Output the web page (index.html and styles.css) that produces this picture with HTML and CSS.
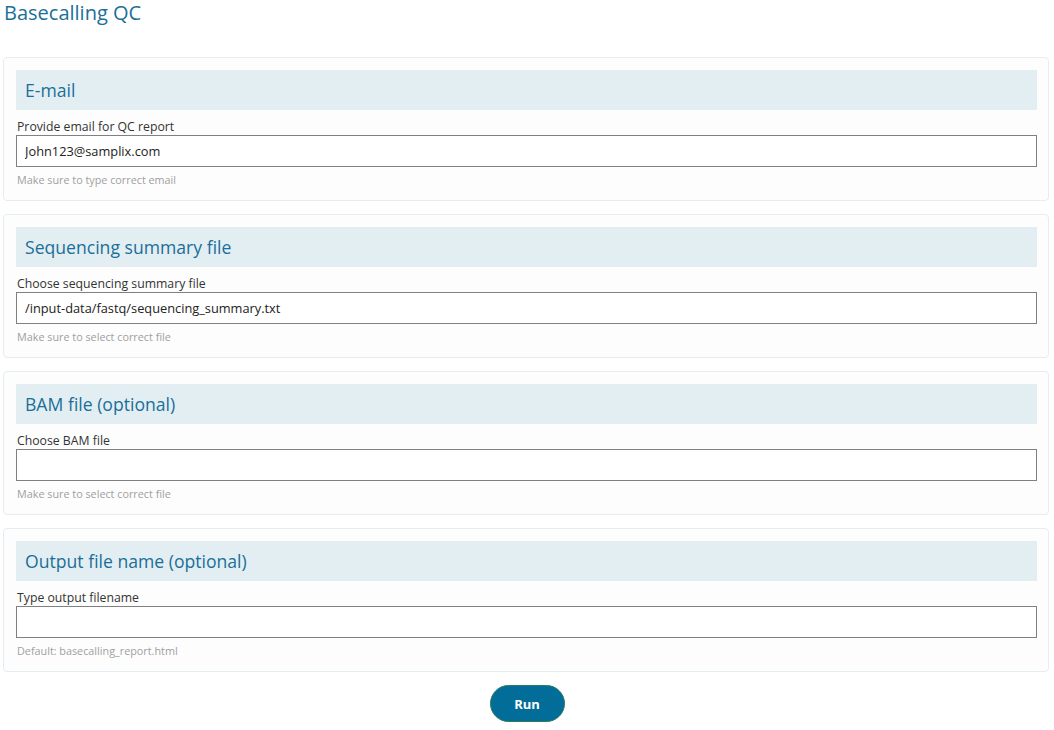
FILE: index.html
```html
<!DOCTYPE html>
<html lang="en">
<head>
<meta charset="utf-8">
<title>Basecalling QC</title>
<link rel="stylesheet" href="styles.css">
</head>
<body>
<h1 class="page-title">Basecalling QC</h1>
<form class="form">
  <section class="card">
    <div class="card-header">E-mail</div>
    <label class="field-label">Provide email for QC report</label>
    <input class="field-input" type="text" value="John123@samplix.com">
    <div class="field-help">Make sure to type correct email</div>
  </section>
  <section class="card">
    <div class="card-header">Sequencing summary file</div>
    <label class="field-label">Choose sequencing summary file</label>
    <input class="field-input" type="text" value="/input-data/fastq/sequencing_summary.txt">
    <div class="field-help">Make sure to select correct file</div>
  </section>
  <section class="card">
    <div class="card-header">BAM file (optional)</div>
    <label class="field-label">Choose BAM file</label>
    <input class="field-input" type="text" value="">
    <div class="field-help">Make sure to select correct file</div>
  </section>
  <section class="card">
    <div class="card-header">Output file name (optional)</div>
    <label class="field-label">Type output filename</label>
    <input class="field-input" type="text" value="">
    <div class="field-help">Default: basecalling_report.html</div>
  </section>
  <div class="actions">
    <button type="button" class="run-btn">Run</button>
  </div>
</form>
</body>
</html>
```

FILE: styles.css
```css
* { box-sizing: border-box; }
html, body { background: #ffffff; }
body {
  margin: 0;
  padding: 0 5px 0 3px;
  font-family: "Open Sans", "Liberation Sans", sans-serif;
  color: #333333;
}
.page-title {
  margin: 0;
  padding-left: 1px;
  font-size: 20px;
  line-height: 26px;
  font-weight: 400;
  color: #1b6f98;
  height: 57px;
}
.form {
  display: flex;
  flex-direction: column;
  gap: 13px;
}
.card {
  height: 144px;
  border: 1px solid #e4eef2;
  border-radius: 4px;
  background: #fdfdfd;
  padding: 12px 11px 0 12px;
  display: flex;
  flex-direction: column;
}
.card-header {
  flex: none;
  height: 40px;
  background: #e3eef3;
  display: flex;
  align-items: center;
  padding-left: 9px;
  font-size: 17.6px;
  color: #1a6f98;
}
.field-label {
  margin-top: 8px;
  padding-left: 1px;
  font-size: 12.25px;
  line-height: 17px;
  color: #333333;
}
.field-input {
  flex: none;
  height: 32px;
  border: 1px solid #808080;
  border-radius: 0;
  background: #ffffff;
  padding: 0 8px;
  font-family: "Open Sans", "Liberation Sans", sans-serif;
  font-size: 12.8px;
  color: #222222;
  width: 100%;
}
.field-help {
  margin-top: 6px;
  padding-left: 1px;
  font-size: 10.8px;
  line-height: 14px;
  font-weight: 400;
  color: #a0a0a0;
}
.actions {
  display: flex;
  justify-content: center;
  padding-left: 2px;
}
.run-btn {
  width: 75px;
  height: 37px;
  border-radius: 19px;
  border: 1px solid #2a7d5e;
  background: #036d99;
  color: #ffffff;
  font-family: "Open Sans", "Liberation Sans", sans-serif;
  font-weight: 700;
  font-size: 13px;
}
```
